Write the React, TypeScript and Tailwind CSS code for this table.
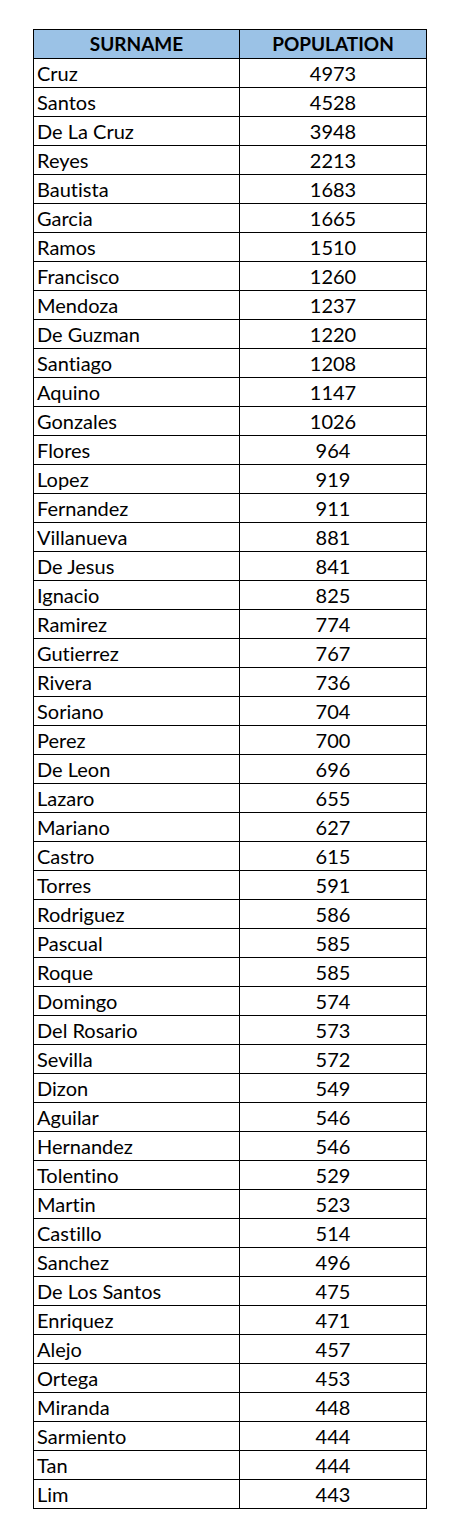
import React from 'react';

const rows: [string, number][] = [
  ['Cruz', 4973],
  ['Santos', 4528],
  ['De La Cruz', 3948],
  ['Reyes', 2213],
  ['Bautista', 1683],
  ['Garcia', 1665],
  ['Ramos', 1510],
  ['Francisco', 1260],
  ['Mendoza', 1237],
  ['De Guzman', 1220],
  ['Santiago', 1208],
  ['Aquino', 1147],
  ['Gonzales', 1026],
  ['Flores', 964],
  ['Lopez', 919],
  ['Fernandez', 911],
  ['Villanueva', 881],
  ['De Jesus', 841],
  ['Ignacio', 825],
  ['Ramirez', 774],
  ['Gutierrez', 767],
  ['Rivera', 736],
  ['Soriano', 704],
  ['Perez', 700],
  ['De Leon', 696],
  ['Lazaro', 655],
  ['Mariano', 627],
  ['Castro', 615],
  ['Torres', 591],
  ['Rodriguez', 586],
  ['Pascual', 585],
  ['Roque', 585],
  ['Domingo', 574],
  ['Del Rosario', 573],
  ['Sevilla', 572],
  ['Dizon', 549],
  ['Aguilar', 546],
  ['Hernandez', 546],
  ['Tolentino', 529],
  ['Martin', 523],
  ['Castillo', 514],
  ['Sanchez', 496],
  ['De Los Santos', 475],
  ['Enriquez', 471],
  ['Alejo', 457],
  ['Ortega', 453],
  ['Miranda', 448],
  ['Sarmiento', 444],
  ['Tan', 444],
  ['Lim', 443],
];

export default function App() {
  return (
    <div className="min-h-[1538px] bg-white pl-[33px] pt-[29px] font-['Lato',_'Liberation_Sans',_sans-serif] text-[20px] text-black [font-variant-ligatures:none]">
      <div className="w-[394px] border-x border-t border-black">
        <div className="flex h-[29px] border-b border-black bg-[#9bc2e6] text-[19px] font-bold">
          <div className="flex w-[206px] items-end justify-center border-r border-black pb-[4px] leading-[20px]">
            SURNAME
          </div>
          <div className="flex flex-1 items-end justify-center pb-[4px] leading-[20px]">POPULATION</div>
        </div>
        {rows.map(([name, pop]) => (
          <div key={name} className="flex h-[29px] border-b border-black">
            <div className="flex w-[206px] items-end border-r border-black pb-[4px] pl-[3px] leading-[20px]">
              {name}
            </div>
            <div className="flex flex-1 items-end justify-center pb-[4px] leading-[20px]">{pop}</div>
          </div>
        ))}
      </div>
    </div>
  );
}
